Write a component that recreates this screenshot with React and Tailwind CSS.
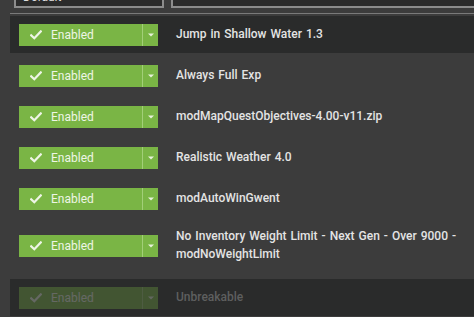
import React from "react";

function Check({ className }) {
  return (
    <svg width="12" height="10" viewBox="0 0 12 10" className={className}>
      <path d="M1.2 5.4 L4.3 8.3 L10.8 1.4" fill="none" stroke="currentColor" strokeWidth="2.2" strokeLinecap="square" />
    </svg>
  );
}

function Toggle() {
  return (
    <div className="flex h-[22px] w-[139px] shrink-0 bg-[#7ab545] text-[#eef5e6]">
      <div className="flex flex-1 items-center pl-[11px]">
        <Check className="mr-[9px]" />
        <span className="text-[12px] leading-none">Enabled</span>
      </div>
      <div className="w-px bg-[#a2cf78]" />
      <div className="flex w-[15px] items-center justify-center">
        <svg width="6" height="4" viewBox="0 0 6 4">
          <path d="M0 0.5 H6 L3 3.5 Z" fill="#e8f2dc" />
        </svg>
      </div>
    </div>
  );
}

function Row({ dark, faded, children, tall }) {
  return (
    <div
      className={
        "mb-[4px] flex items-center " +
        (tall ? "pt-[7px] pb-[12px] " : "h-[37px] ") +
        (dark ? "bg-[#2a2b2b]" : "")
      }
    >
      <div className={"pl-[9px] " + (faded ? "opacity-30" : "")}>
        <Toggle />
      </div>
      <div
        className={
          "ml-[18px] whitespace-nowrap text-[12px] font-medium leading-[17.5px] [word-spacing:1px] " +
          (faded ? "text-[#5e5f5f]" : "text-[#e4e4e4]")
        }
      >
        {children}
      </div>
    </div>
  );
}

export default function App() {
  return (
    <div className="h-[317px] w-[474px] overflow-hidden bg-[#3c3c3c] font-['Roboto',sans-serif]">
      <div className="pl-[10px]">
        <div className="flex h-[8px] items-end gap-[7px] overflow-hidden pl-[4px]">
          <div className="flex h-[24px] w-[150px] shrink-0 items-start border-2 border-[#8c8c8c] bg-[#2b2b2b] pl-[7px] pt-[4px] text-[12px] leading-[15px] text-[#dcdcdc]">
            Default
          </div>
          <div className="h-[24px] flex-1 border-2 border-r-0 border-[#8c8c8c] bg-[#2b2b2b]" />
        </div>
        <div className="mt-[5px] h-px bg-[#7a7a7a]" />
        <div className="mt-[2px]">
          <Row dark>Jump in Shallow Water 1.3</Row>
          <Row>Always Full Exp</Row>
          <Row>modMapQuestObjectives-4.00-v11.zip</Row>
          <Row>Realistic Weather 4.0</Row>
          <Row>modAutoWinGwent</Row>
          <Row tall>
            No Inventory Weight Limit - Next Gen - Over 9000 -
            <br />
            modNoWeightLimit
          </Row>
          <Row dark faded>Unbreakable</Row>
        </div>
      </div>
    </div>
  );
}
